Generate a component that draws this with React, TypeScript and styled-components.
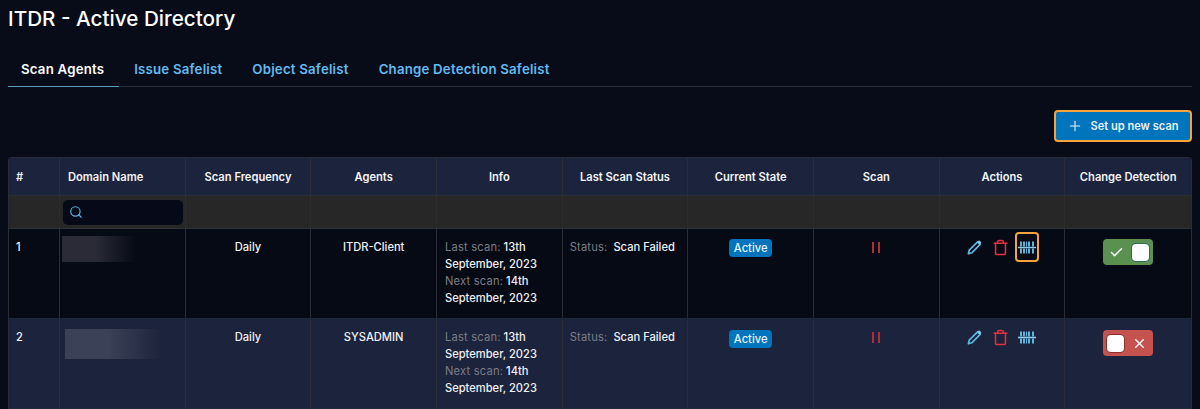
import React from 'react'
import styled, { createGlobalStyle } from 'styled-components'
import { Check, Plus, Search, Trash, X } from 'lucide-react'

const GlobalStyle = createGlobalStyle`
  html, body {
    margin: 0;
    height: 100%;
    overflow: hidden;
    background: #080c18;
    color: #ffffff;
    font-family: Inter, "Liberation Sans", sans-serif;
  }
`

type Agent = {
  id: number
  blurWidth: number
  blurHeight: number
  blurLeft: number
  blurTop: number
  client: string
  enabled: boolean
  focused: boolean
}

const agents: Agent[] = [
  { id: 1, blurWidth: 74, blurHeight: 26, blurLeft: 2, blurTop: 7, client: 'ITDR-Client', enabled: true, focused: true },
  { id: 2, blurWidth: 96, blurHeight: 30, blurLeft: 5, blurTop: 10, client: 'SYSADMIN', enabled: false, focused: false },
]

const headers = ['Scan Frequency', 'Agents', 'Info', 'Last Scan Status', 'Current State', 'Scan', 'Actions', 'Change Detection']

function PencilIcon() {
  return (
    <svg width="16" height="16" viewBox="0 0 16 16" fill="none">
      <path d="M2.2 11.2 10.6 2.8l2.6 2.6-8.4 8.4-3.4 1z" stroke="#5fb4de" strokeWidth="1.7" strokeLinejoin="round" />
      <path d="M10.6 2.8c.8-.8 1.900-.9 2.600-.2s.6 1.800-.2 2.600z" fill="#8fd0f0" stroke="#8fd0f0" strokeWidth="1" strokeLinejoin="round" />
    </svg>
  )
}

function BarcodeIcon() {
  return (
    <svg width="18" height="13" viewBox="0 0 18 13" fill="none" stroke="#5fb4de">
      <path d="M0 6.500h18" strokeWidth="1.600" stroke="#8acbea" />
      <path d="M3 0.500v5M3 7.500v5M6 0.500v5M6 7.500v5M11 0.500v5M11 7.500v5M15 0.500v5M15 7.500v5" strokeWidth="2" />
      <path d="M8.500 0.500v5M8.500 7.500v5" strokeWidth="1" />
    </svg>
  )
}

export default function App() {
  return (
    <Page>
      <GlobalStyle />
      <Title>ITDR - Active Directory</Title>
      <Tabs>
        <Tab $active>Scan Agents</Tab>
        <Tab>Issue Safelist</Tab>
        <Tab>Object Safelist</Tab>
        <Tab>Change Detection Safelist</Tab>
      </Tabs>
      <Toolbar>
        <NewScanButton>
          <Plus size={16} strokeWidth={1.6} />
          Set up new scan
        </NewScanButton>
      </Toolbar>
      <Table>
        <HeaderRow>
          <HeaderCell $left>#</HeaderCell>
          <HeaderCell $left $indent>Domain Name</HeaderCell>
          {headers.map((h) => (
            <HeaderCell key={h}>{h}</HeaderCell>
          ))}
        </HeaderRow>
        <FilterRow>
          <FilterCell />
          <FilterCell>
            <SearchBox>
              <Search size={14} color="#5fb4de" strokeWidth={2} />
            </SearchBox>
          </FilterCell>
          {headers.map((h) => (
            <FilterCell key={h} />
          ))}
        </FilterRow>
        {agents.map((a) => (
          <Row key={a.id} $alt={a.id % 2 === 0}>
            <Cell $left>{a.id}</Cell>
            <Cell $left $flush>
              <Blurred
                style={{ width: a.blurWidth, height: a.blurHeight, marginLeft: a.blurLeft, marginTop: a.blurTop }}
                $alt={a.id % 2 === 0}
              />
            </Cell>
            <Cell>Daily</Cell>
            <Cell>{a.client}</Cell>
            <Cell $left $indent>
              <div><Muted>Last scan:</Muted> 13th</div>
              <div>September, 2023</div>
              <div><Muted>Next scan:</Muted> 14th</div>
              <div>September, 2023</div>
            </Cell>
            <Cell $left>
              <Muted>Status:</Muted>&nbsp; Scan Failed
            </Cell>
            <Cell>
              <Badge>Active</Badge>
            </Cell>
            <Cell>
              <PauseIcon><PauseBar /><PauseBar /></PauseIcon>
            </Cell>
            <Cell>
              <Actions>
                <ActionIcon><PencilIcon /></ActionIcon>
                <ActionIcon><TrashRed size={17} strokeWidth={2.2} /></ActionIcon>
                <BarcodeButton $focused={a.focused}>
                  <BarcodeIcon />
                </BarcodeButton>
              </Actions>
            </Cell>
            <Cell>
              <Toggle $on={a.enabled}>
                {a.enabled ? <Check size={15} strokeWidth={2.4} /> : null}
                <Knob $on={a.enabled} />
                {!a.enabled ? <X size={15} strokeWidth={2.4} /> : null}
              </Toggle>
            </Cell>
          </Row>
        ))}
      </Table>
    </Page>
  )
}

const Page = styled.div`
  padding: 0 8px;
  height: 409px;
  box-sizing: border-box;
  overflow: hidden;
`

const Title = styled.h1`
  margin: 0;
  padding-top: 5px;
  height: 48px;
  box-sizing: border-box;
  font-size: 20.7px;
  line-height: 27px;
  font-weight: 500;
  color: #fff;
`

const Tabs = styled.div`
  display: flex;
  height: 39px;
  box-sizing: border-box;
  border-bottom: 1px solid #2a2d35;
`

const Tab = styled.div<{ $active?: boolean }>`
  height: 39px;
  box-sizing: border-box;
  padding: 13px 15px 0 ${(p) => (p.$active ? '13px' : '15px')};
  font-size: 13.25px;
  line-height: 16px;
  font-weight: 600;
  letter-spacing: 0.2px;
  white-space: nowrap;
  color: ${(p) => (p.$active ? '#ffffff' : '#62baf0')};
  border-bottom: ${(p) => (p.$active ? '1px solid #5b9dbd' : 'none')};
`

const Toolbar = styled.div`
  display: flex;
  justify-content: flex-end;
  padding: 23px 0 15px;
`

const NewScanButton = styled.button`
  display: flex;
  align-items: center;
  justify-content: center;
  gap: 7px;
  width: 138px;
  height: 32px;
  padding: 0;
  background: #0074bd;
  border: 2px solid #f5a33a;
  border-radius: 4px;
  color: #e8f1f8;
  font-family: inherit;
  font-size: 11.1px;
  font-weight: 600;
`

const Table = styled.div`
  border: 1px solid #2a2d35;
  border-bottom: none;
  border-radius: 4px 4px 0 0;
  overflow: hidden;
`

const gridColumns = '51px repeat(9, 1fr)'

const HeaderRow = styled.div`
  display: grid;
  grid-template-columns: ${gridColumns};
  height: 37px;
  background: #1c233c;
  border-bottom: 1px solid #2a2d35;
`

const HeaderCell = styled.div<{ $left?: boolean; $indent?: boolean }>`
  display: flex;
  align-items: center;
  justify-content: ${(p) => (p.$left ? 'flex-start' : 'center')};
  padding-left: ${(p) => (p.$indent ? '8px' : p.$left ? '7px' : '0')};
  font-size: 11.15px;
  font-weight: 600;
  color: #f2f4f8;
  border-right: 1px solid #2a2d35;
  &:last-child {
    border-right: none;
  }
`

const FilterRow = styled.div`
  display: grid;
  grid-template-columns: ${gridColumns};
  height: 32px;
  background: #272727;
  border-bottom: 1px solid #2f3338;
`

const FilterCell = styled.div`
  display: flex;
  align-items: center;
  padding-left: 3px;
  border-right: 1px solid #2c2c2c;
  &:last-child {
    border-right: none;
  }
`

const SearchBox = styled.div`
  display: flex;
  align-items: center;
  width: 120px;
  height: 25px;
  padding-left: 6px;
  box-sizing: border-box;
  background: #060a18;
  border-radius: 5px;
`

const Row = styled.div<{ $alt: boolean }>`
  display: grid;
  grid-template-columns: ${gridColumns};
  height: 90px;
  box-sizing: border-box;
  background: ${(p) => (p.$alt ? '#1c233c' : '#060a14')};
  border-bottom: 1px solid #1c2a3c;
  --item-shift: ${(p) => (p.$alt ? '1px' : '0px')};
`

const Cell = styled.div<{ $left?: boolean; $indent?: boolean; $flush?: boolean }>`
  padding-top: ${(p) => (p.$flush ? '0' : '10px')};
  padding-left: ${(p) => (p.$indent ? '8px' : p.$left && !p.$flush ? '7px' : '0')};
  text-align: ${(p) => (p.$left ? 'left' : 'center')};
  font-size: 11.15px;
  line-height: 17px;
  font-weight: 500;
  color: #eef0f5;
  border-right: 1px solid #2a2d35;
  overflow: hidden;
  &:last-child {
    border-right: none;
  }
`

const Blurred = styled.div<{ $alt: boolean }>`
  background: linear-gradient(90deg, ${(p) => (p.$alt ? '#3b4257' : '#2a2b36')} 0%, ${(p) => (p.$alt ? '#3b4257' : '#2a2b36')} 45%, ${(p) => (p.$alt ? '#1c233c' : '#060a14')} 100%);
`

const Muted = styled.span`
  color: #7b7d85;
  font-weight: 400;
  letter-spacing: 0.2px;
`

const Badge = styled.span`
  display: inline-block;
  vertical-align: top;
  padding: 0 5px;
  margin-top: var(--item-shift);
  height: 18px;
  line-height: 18px;
  background: #0074bd;
  border-radius: 4px;
  font-size: 11.15px;
  font-weight: 500;
  color: #e8f1f8;
`

const PauseIcon = styled.span`
  display: inline-flex;
  vertical-align: top;
  gap: 4px;
  margin-top: 3px;
`

const PauseBar = styled.i`
  display: block;
  width: 2px;
  height: 11px;
  background: #b32c38;
`

const Actions = styled.div`
  display: flex;
  align-items: flex-start;
  justify-content: center;
  gap: 9px;
  margin-left: 3px;
  margin-top: -7px;
`

const ActionIcon = styled.span`
  display: flex;
  margin-top: 7px;
`

const TrashRed = styled(Trash)`
  color: #e0313f;
`

const BarcodeButton = styled.span<{ $focused: boolean }>`
  display: flex;
  align-items: center;
  justify-content: center;
  width: 24px;
  height: 30px;
  box-sizing: border-box;
  margin-left: -3px;
  border: 2px solid ${(p) => (p.$focused ? '#f5a33a' : 'transparent')};
  border-radius: 4px;
`

const Toggle = styled.div<{ $on: boolean }>`
  display: inline-flex;
  vertical-align: top;
  align-items: center;
  justify-content: space-between;
  width: 50px;
  height: 26px;
  box-sizing: border-box;
  padding-left: ${(p) => (p.$on ? '6px' : '4px')};
  padding-right: ${(p) => (p.$on ? '4px' : '6px')};
  margin-top: var(--item-shift);
  background: ${(p) => (p.$on ? '#5a9150' : '#c4524f')};
  border-radius: 4px;
  color: #f5f5f5;
`

const Knob = styled.span<{ $on: boolean }>`
  width: 17px;
  height: 17px;
  background: #fff;
  border-radius: 4px;
  box-shadow: 0 0 0 1px ${(p) => (p.$on ? '#2f6b5c' : '#8f2c2c')};
`
